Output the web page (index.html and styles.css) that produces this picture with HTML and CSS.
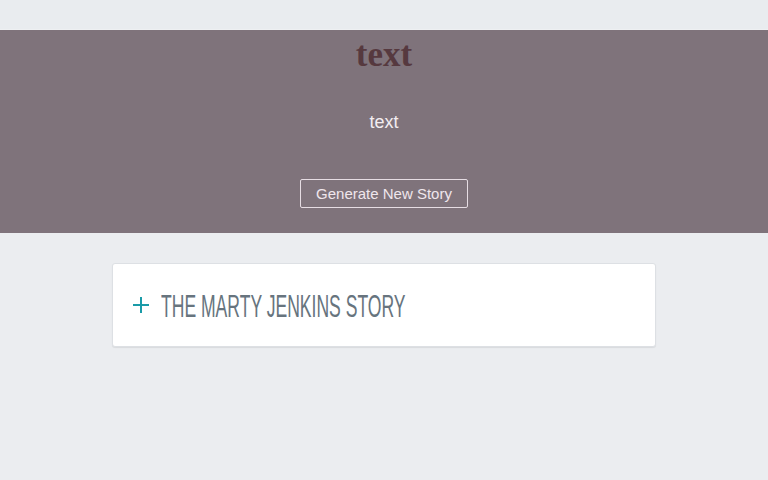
FILE: index.html
```html
<!DOCTYPE html>
<html>
<head>
<meta charset="utf-8">
<link rel="stylesheet" href="styles.css">
</head>
<body>
<div class="topbar"></div>
<header class="hero">
  <h1 class="hero-title">text</h1>
  <p class="hero-sub">text</p>
  <button class="hero-btn">Generate New Story</button>
</header>
<main class="main">
  <section class="card">
    <svg class="plus" width="16" height="16" viewBox="0 0 16 16"><path d="M8 0V16M0 8H16" stroke="#1a9ba8" stroke-width="2" fill="none"/></svg>
    <h2 class="card-title"><span class="stretch">THE MARTY JENKINS STORY</span></h2>
  </section>
</main>
</body>
</html>
```
FILE: styles.css
```css
html, body {
  margin: 0;
  padding: 0;
}
body {
  background: #ebedf0;
  font-family: "Liberation Sans", Arial, sans-serif;
  width: 768px;
  height: 480px;
  overflow: hidden;
}
.topbar {
  height: 29px;
  background: #e9ecef;
  border-bottom: 1px solid #eef0f2;
}
.hero {
  background: #7f737b;
  height: 203px;
  display: flex;
  flex-direction: column;
  align-items: center;
  box-sizing: border-box;
}
.hero-title {
  margin: 0;
  padding-top: 4px;
  font-family: "Liberation Serif", "Times New Roman", serif;
  font-weight: bold;
  font-size: 35px;
  line-height: 42px;
  color: #56393f;
}
.hero-sub {
  margin: 35px 0 0;
  font-size: 18px;
  line-height: 22px;
  color: #f3edf1;
}
.hero-btn {
  margin-top: 46px;
  background: transparent;
  border: 1px solid #e6dde3;
  border-radius: 2px;
  color: #efe6ec;
  font-family: "Liberation Sans", Arial, sans-serif;
  font-size: 15px;
  line-height: 17px;
  height: 29px;
  padding: 0 15px;
}
.main {
  padding-top: 30px;
  display: flex;
  justify-content: center;
}
.card {
  width: 544px;
  height: 84px;
  box-sizing: border-box;
  background: #ffffff;
  border: 1px solid #dde0e4;
  border-radius: 3px;
  box-shadow: 0 1px 1px rgba(0,0,0,0.08);
  display: flex;
  align-items: center;
  padding-left: 20px;
  gap: 12px;
}
.plus {
  flex: none;
}
.card-title {
  margin: 0;
  font-family: "Liberation Sans", Arial, sans-serif;
  font-weight: normal;
  font-size: 21px;
  line-height: 24px;
  color: #67747e;
}
.stretch {
  display: inline-block;
  transform-origin: left center;
  transform: scale(0.836, 1.45);
  padding-top: 2px;
}
```
